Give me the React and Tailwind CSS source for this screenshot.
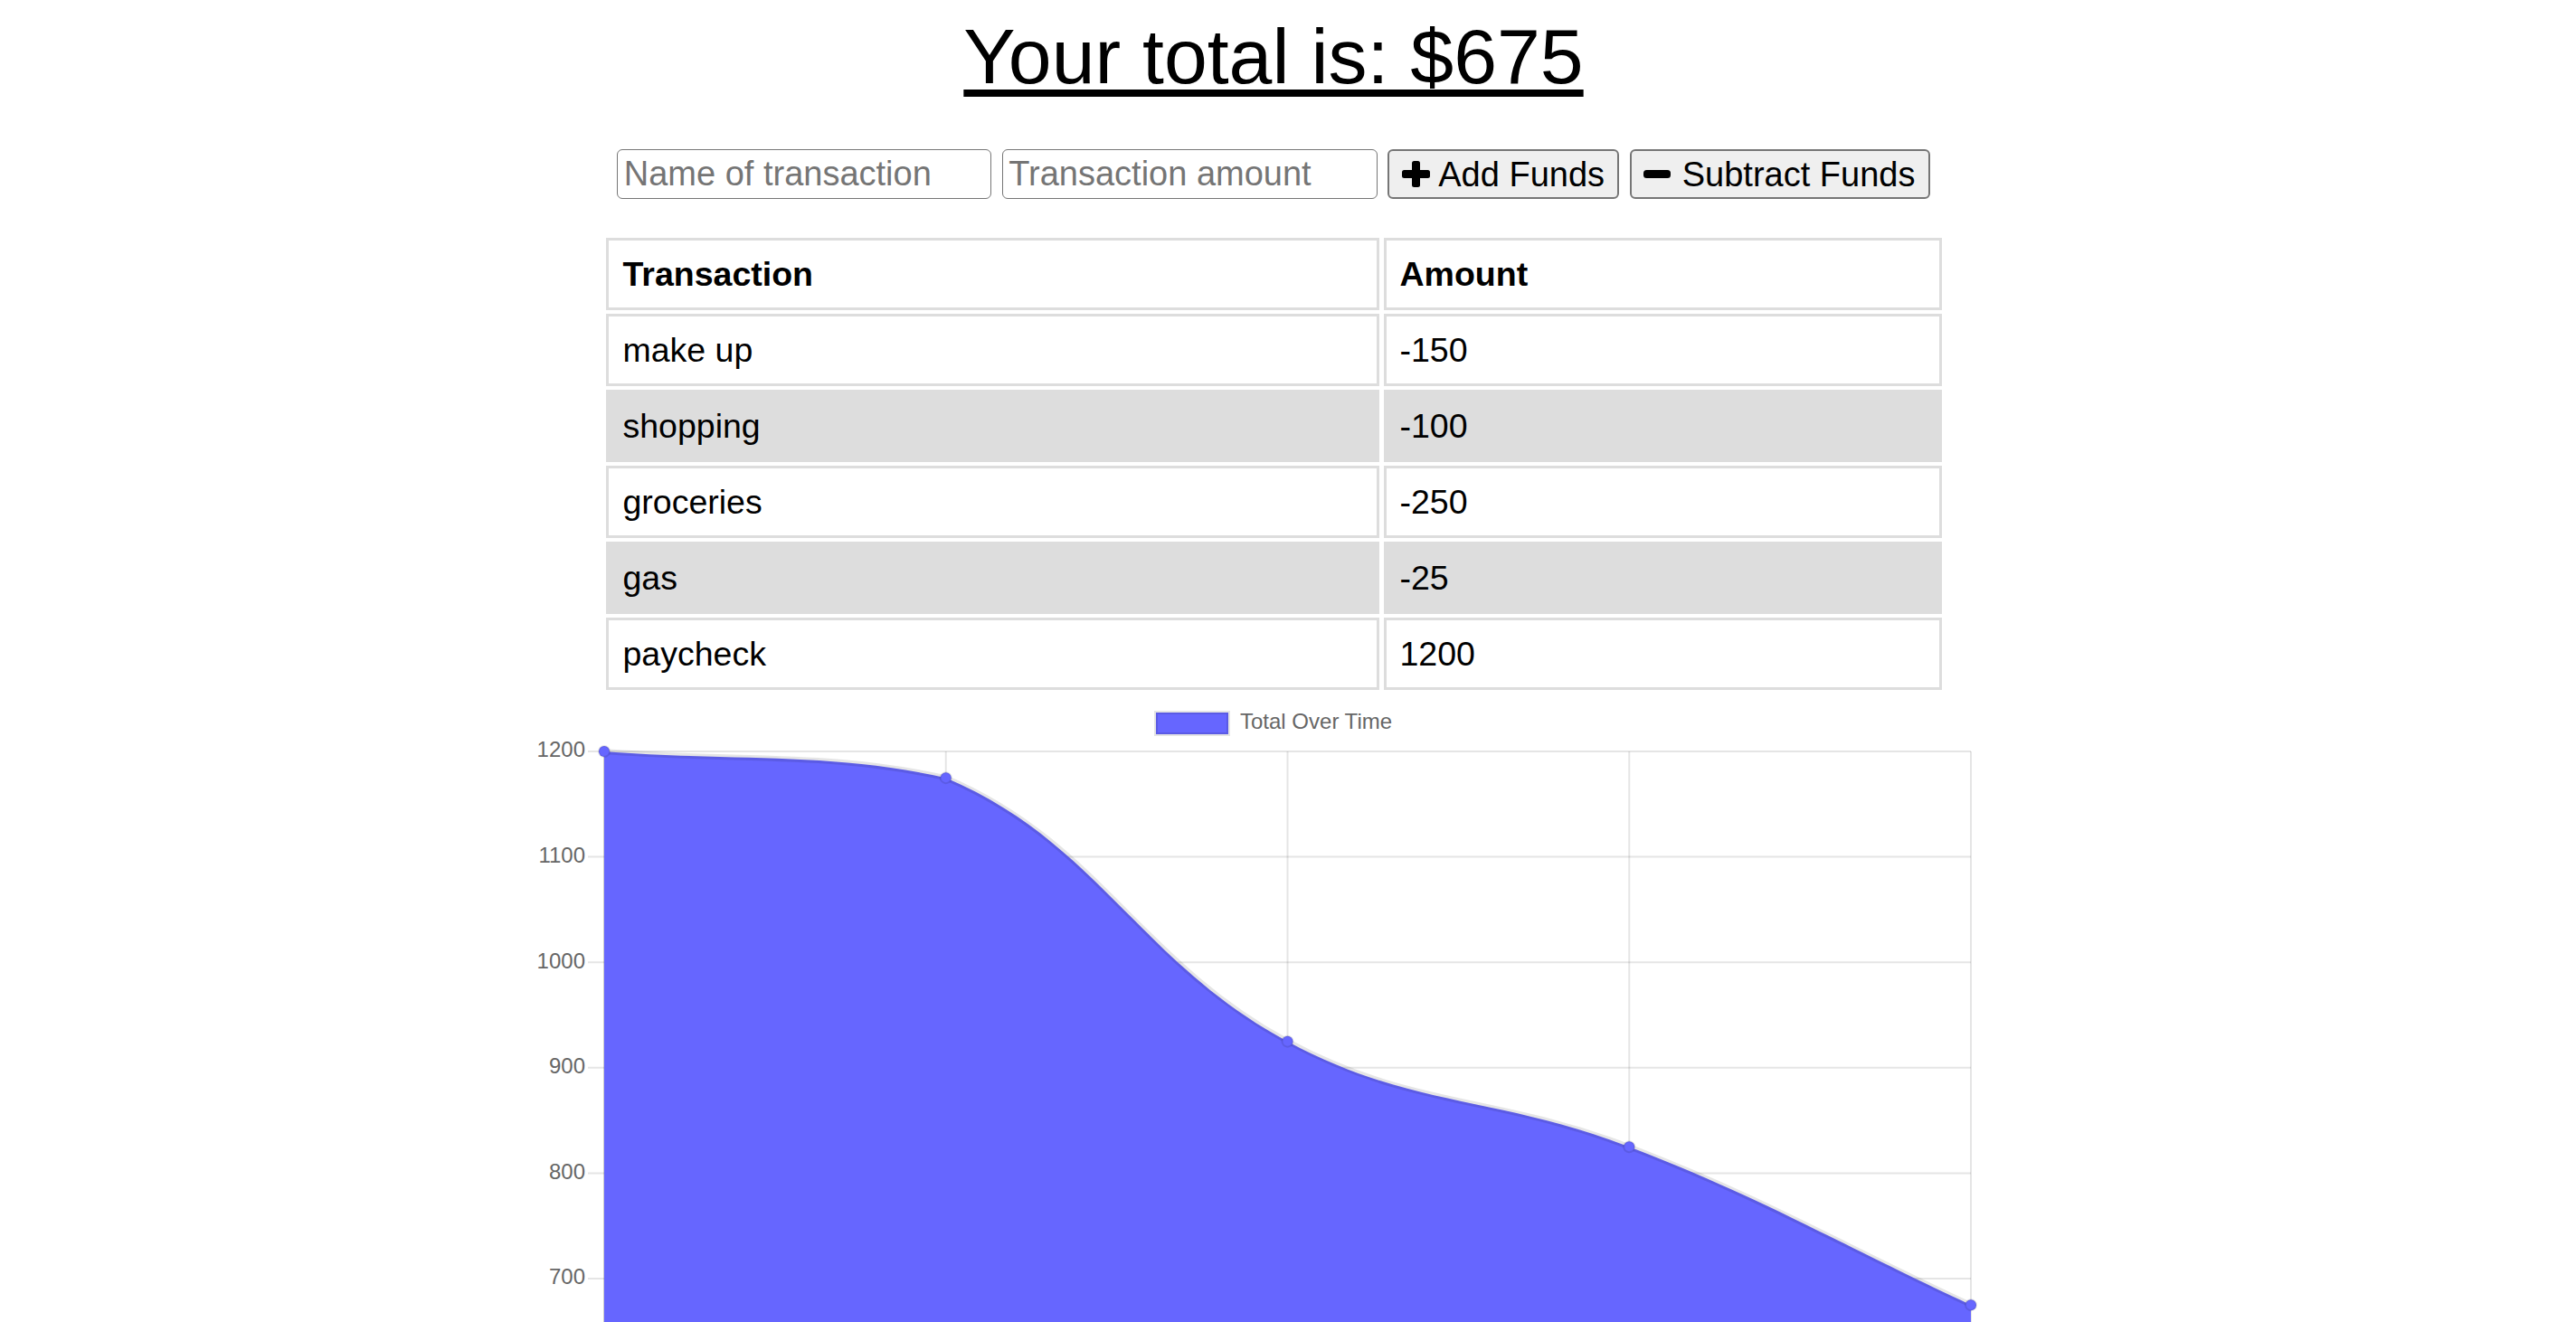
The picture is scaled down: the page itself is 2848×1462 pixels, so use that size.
import React from "react";

const rows = [
  { name: "make up", amount: "-150" },
  { name: "shopping", amount: "-100" },
  { name: "groceries", amount: "-250" },
  { name: "gas", amount: "-25" },
  { name: "paycheck", amount: "1200" },
];

// chart geometry (svg coords)
const TOP = 64;
const STEP = 116.6; // px per 100
const X0 = 108;
const XSTEP = 377.75;
const H = 695;
const values = [1200, 1175, 925, 825, 675];
const ticks = [1200, 1100, 1000, 900, 800, 700];

const yFor = (v) => TOP + ((1200 - v) / 100) * STEP;

function splinePath(pts, t = 0.4) {
  const minX = pts[0].x;
  const maxX = pts[pts.length - 1].x;
  const cps = pts.map((p, i) => {
    const prev = pts[i - 1] || p;
    const next = pts[i + 1] || p;
    const d01 = Math.hypot(p.x - prev.x, p.y - prev.y);
    const d12 = Math.hypot(next.x - p.x, next.y - p.y);
    let s01 = d01 / (d01 + d12);
    let s12 = d12 / (d01 + d12);
    if (isNaN(s01)) s01 = 0;
    if (isNaN(s12)) s12 = 0;
    const fa = t * s01;
    const fb = t * s12;
    const cap = (c) => ({
      x: Math.min(Math.max(c.x, minX), maxX),
      y: Math.max(c.y, TOP),
    });
    return {
      prev: cap({ x: p.x - fa * (next.x - prev.x), y: p.y - fa * (next.y - prev.y) }),
      next: cap({ x: p.x + fb * (next.x - prev.x), y: p.y + fb * (next.y - prev.y) }),
    };
  });
  let d = `M${pts[0].x},${pts[0].y}`;
  for (let i = 1; i < pts.length; i++) {
    const a = cps[i - 1].next;
    const b = cps[i].prev;
    d += ` C${a.x},${a.y} ${b.x},${b.y} ${pts[i].x},${pts[i].y}`;
  }
  return d;
}

function PlusIcon() {
  return (
    <svg width="31" height="29" viewBox="0 0 31 29" className="shrink-0">
      <rect x="0" y="10" width="31" height="9" rx="2.5" fill="#000" />
      <rect x="11" y="0" width="9" height="29" rx="2.5" fill="#000" />
    </svg>
  );
}

function MinusIcon() {
  return (
    <svg width="30" height="9" viewBox="0 0 30 9" className="shrink-0">
      <rect x="0" y="0" width="30" height="9" rx="3.5" fill="#000" />
    </svg>
  );
}

function Chart() {
  const pts = values.map((v, i) => ({ x: X0 + i * XSTEP, y: yFor(v) }));
  const line = splinePath(pts);
  const area = `${line} L${pts[pts.length - 1].x},${H + 20} L${X0},${H + 20} Z`;
  const font = "'Liberation Sans', Arial, sans-serif";

  return (
    <svg width="1696" height={H} viewBox={`0 0 1696 ${H}`} className="block">
      {/* legend */}
      <rect x="718" y="21" width="80" height="24" fill="#6666ff" stroke="rgba(0,0,0,0.1)" strokeWidth="4" />
      <text x="811" y="33" dominantBaseline="middle" fontSize="24" fill="#666" fontFamily={font}>
        Total Over Time
      </text>

      {/* grid */}
      {ticks.map((v) => (
        <g key={v}>
          <line x1="90" x2={X0 + 4 * XSTEP} y1={yFor(v)} y2={yFor(v)} stroke="rgba(0,0,0,0.1)" strokeWidth="2" />
          <text x="87" y={yFor(v)} textAnchor="end" dominantBaseline="middle" fontSize="24" fill="#666" fontFamily={font}>
            {v}
          </text>
        </g>
      ))}
      {[0, 1, 2, 3, 4].map((i) => (
        <line
          key={i}
          x1={X0 + i * XSTEP}
          x2={X0 + i * XSTEP}
          y1={TOP}
          y2={H}
          stroke={i === 0 ? "rgba(0,0,0,0.2)" : "rgba(0,0,0,0.1)"}
          strokeWidth="2"
        />
      ))}

      {/* dataset */}
      <path d={area} fill="#6666ff" />
      <path d={line} fill="none" stroke="rgba(0,0,0,0.1)" strokeWidth="6" />
      {pts.map((p, i) => (
        <circle key={i} cx={p.x} cy={p.y} r="6" fill="#6666ff" stroke="rgba(0,0,0,0.1)" strokeWidth="2" />
      ))}
    </svg>
  );
}

export default function App() {
  return (
    <div className="w-[2816px] flex flex-col items-center bg-white text-black font-['Liberation_Sans',Arial,sans-serif]">
      <h1 className="mt-[15px] text-[86px] leading-[95px] font-normal underline decoration-[length:8px] underline-offset-[7px]">
        Your total is: $675
      </h1>

      <form className="mt-[55px] flex items-stretch gap-[11.5px] h-[55px]" onSubmit={(e) => e.preventDefault()}>
        <input
          type="text"
          placeholder="Name of transaction"
          className="w-[414px] h-[55px] border-[1.5px] border-[#767676] rounded-[6px] pl-[6.5px] pr-[4px] text-[38px] bg-white placeholder:text-[#757575] outline-none"
        />
        <input
          type="number"
          placeholder="Transaction amount"
          className="w-[415px] h-[55px] border-[1.5px] border-[#767676] rounded-[6px] pl-[6.5px] pr-[4px] text-[38px] bg-white placeholder:text-[#757575] outline-none"
        />
        <button
          type="button"
          className="w-[256px] h-[55px] flex items-center pl-[14px] border-2 border-[#767676] rounded-[6px] bg-[#efefef] text-[38px] leading-none"
        >
          <PlusIcon />
          <span className="ml-[9px]">Add Funds</span>
        </button>
        <button
          type="button"
          className="w-[332px] h-[55px] flex items-center pl-[13px] border-2 border-[#767676] rounded-[6px] bg-[#efefef] text-[38px] leading-none"
        >
          <MinusIcon />
          <span className="ml-[13px]">Subtract Funds</span>
        </button>
      </form>

      <table className="mt-[39px] border-separate border-spacing-x-[5px] border-spacing-y-[4px] text-[37.5px]">
        <thead>
          <tr>
            <th className="w-[855px] p-0 border-[3px] border-[#dddddd] text-left font-bold">
              <div className="h-[74px] flex items-center px-[16px]">Transaction</div>
            </th>
            <th className="w-[617px] p-0 border-[3px] border-[#dddddd] text-left font-bold">
              <div className="h-[74px] flex items-center px-[15px]">Amount</div>
            </th>
          </tr>
        </thead>
        <tbody>
          {rows.map((r, i) => {
            const cell =
              i % 2 === 1
                ? "p-0 border-[3px] border-[#dddddd] bg-[#dddddd]"
                : "p-0 border-[3px] border-[#dddddd] bg-white";
            return (
              <tr key={r.name}>
                <td className={cell}>
                  <div className="h-[74px] flex items-center px-[16px]">{r.name}</div>
                </td>
                <td className={cell}>
                  <div className="h-[74px] flex items-center px-[15px]">{r.amount}</div>
                </td>
              </tr>
            );
          })}
        </tbody>
      </table>

      <Chart />
    </div>
  );
}
